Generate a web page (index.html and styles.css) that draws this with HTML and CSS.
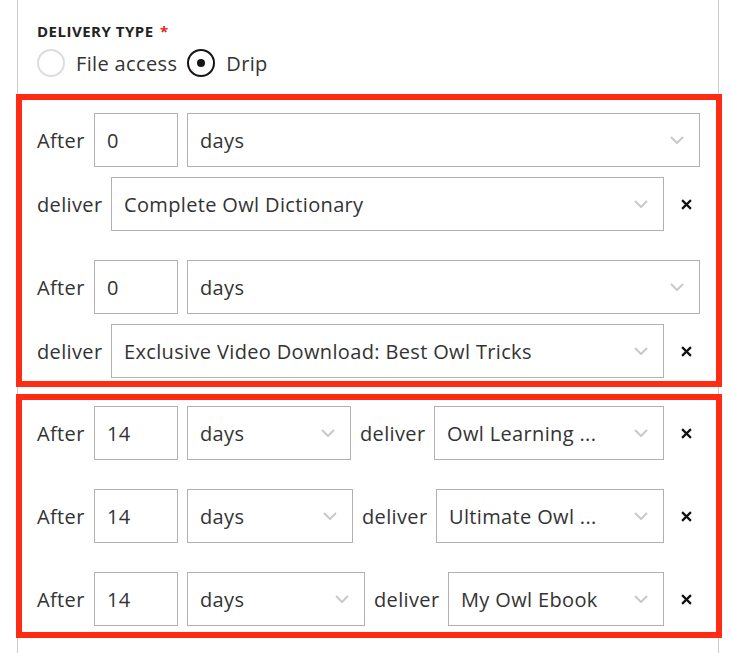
FILE: index.html
```html
<!DOCTYPE html>
<html lang="en">
<head>
<meta charset="utf-8">
<title>Delivery type</title>
<link rel="stylesheet" href="styles.css">
</head>
<body>
<div class="panel">
  <div class="field">
    <div class="field-label">DELIVERY TYPE <span class="req">*</span></div>
    <div class="radios">
      <label class="radio"><span class="radio-dot"></span><span>File access</span></label>
      <label class="radio is-checked"><span class="radio-dot"></span><span>Drip</span></label>
    </div>
  </div>

  <div class="group group-stacked">
    <div class="item">
      <div class="row">
        <span class="lbl lbl-after">After</span>
        <div class="input">0</div>
        <div class="select grow"><span class="select-text">days</span><svg class="chev" viewBox="0 0 14 8"><polyline points="1,1 7,7 13,1"/></svg></div>
      </div>
      <div class="row">
        <span class="lbl lbl-deliver">deliver</span>
        <div class="select grow"><span class="select-text">Complete Owl Dictionary</span><svg class="chev" viewBox="0 0 14 8"><polyline points="1,1 7,7 13,1"/></svg></div>
        <button class="remove" type="button" aria-label="Remove"><svg viewBox="0 0 10 10"><line x1="1" y1="1" x2="9" y2="9"/><line x1="9" y1="1" x2="1" y2="9"/></svg></button>
      </div>
    </div>
    <div class="item">
      <div class="row">
        <span class="lbl lbl-after">After</span>
        <div class="input">0</div>
        <div class="select grow"><span class="select-text">days</span><svg class="chev" viewBox="0 0 14 8"><polyline points="1,1 7,7 13,1"/></svg></div>
      </div>
      <div class="row">
        <span class="lbl lbl-deliver">deliver</span>
        <div class="select grow"><span class="select-text">Exclusive Video Download: Best Owl Tricks</span><svg class="chev" viewBox="0 0 14 8"><polyline points="1,1 7,7 13,1"/></svg></div>
        <button class="remove" type="button" aria-label="Remove"><svg viewBox="0 0 10 10"><line x1="1" y1="1" x2="9" y2="9"/><line x1="9" y1="1" x2="1" y2="9"/></svg></button>
      </div>
    </div>
  </div>

  <div class="group group-inline">
    <div class="row">
      <span class="lbl lbl-after">After</span>
      <div class="input">14</div>
      <div class="select grow"><span class="select-text">days</span><svg class="chev" viewBox="0 0 14 8"><polyline points="1,1 7,7 13,1"/></svg></div>
      <span class="lbl lbl-deliver">deliver</span>
      <div class="select product product-a"><span class="select-text">Owl Learning ...</span><svg class="chev" viewBox="0 0 14 8"><polyline points="1,1 7,7 13,1"/></svg></div>
      <button class="remove" type="button" aria-label="Remove"><svg viewBox="0 0 10 10"><line x1="1" y1="1" x2="9" y2="9"/><line x1="9" y1="1" x2="1" y2="9"/></svg></button>
    </div>
    <div class="row">
      <span class="lbl lbl-after">After</span>
      <div class="input">14</div>
      <div class="select grow"><span class="select-text">days</span><svg class="chev" viewBox="0 0 14 8"><polyline points="1,1 7,7 13,1"/></svg></div>
      <span class="lbl lbl-deliver">deliver</span>
      <div class="select product product-b"><span class="select-text">Ultimate Owl ...</span><svg class="chev" viewBox="0 0 14 8"><polyline points="1,1 7,7 13,1"/></svg></div>
      <button class="remove" type="button" aria-label="Remove"><svg viewBox="0 0 10 10"><line x1="1" y1="1" x2="9" y2="9"/><line x1="9" y1="1" x2="1" y2="9"/></svg></button>
    </div>
    <div class="row">
      <span class="lbl lbl-after">After</span>
      <div class="input">14</div>
      <div class="select grow"><span class="select-text">days</span><svg class="chev" viewBox="0 0 14 8"><polyline points="1,1 7,7 13,1"/></svg></div>
      <span class="lbl lbl-deliver">deliver</span>
      <div class="select product product-c"><span class="select-text">My Owl Ebook</span><svg class="chev" viewBox="0 0 14 8"><polyline points="1,1 7,7 13,1"/></svg></div>
      <button class="remove" type="button" aria-label="Remove"><svg viewBox="0 0 10 10"><line x1="1" y1="1" x2="9" y2="9"/><line x1="9" y1="1" x2="1" y2="9"/></svg></button>
    </div>
  </div>
</div>
</body>
</html>
```

FILE: styles.css
```css
* { box-sizing: border-box; }

html, body {
  margin: 0;
  padding: 0;
  background: #ffffff;
}

body {
  font-family: "Open Sans", "Liberation Sans", sans-serif;
  color: #333333;
}

.panel {
  margin-left: 17px;
  width: 702px;
  min-height: 653px;
  border-left: 1px solid #cccccc;
  border-right: 1px solid #cccccc;
  padding-top: 21px;
}

.field {
  padding-left: 19px;
}

.field-label {
  font-size: 15px;
  font-weight: 700;
  line-height: 20px;
  color: #222222;
  letter-spacing: 0.5px;
}

.req {
  color: #e5231b;
  margin-left: 2px;
}

.radios {
  display: flex;
  align-items: center;
  gap: 10px;
  margin-top: 8px;
  height: 28px;
}

.radio {
  display: flex;
  align-items: center;
  gap: 11px;
  font-size: 20px;
  letter-spacing: 0.35px;
  color: #333333;
}

.radio-dot {
  width: 28px;
  height: 28px;
  border-radius: 50%;
  border: 2px solid #dddddd;
  display: flex;
  align-items: center;
  justify-content: center;
}

.is-checked .radio-dot {
  border-color: #151515;
}

.is-checked .radio-dot::after {
  content: "";
  width: 8px;
  height: 8px;
  border-radius: 50%;
  background: #151515;
}

.group {
  margin-left: -2px;
  width: 706px;
  border: 6px solid #ff2b12;
  padding-left: 15px;
  padding-right: 16px;
}

.group-stacked {
  margin-top: 17px;
  padding-top: 13px;
  padding-bottom: 3px;
  display: flex;
  flex-direction: column;
  gap: 29px;
}

.group-inline {
  margin-top: 7px;
  padding-top: 6px;
  padding-bottom: 6px;
  display: flex;
  flex-direction: column;
  gap: 29px;
}

.item {
  display: flex;
  flex-direction: column;
  gap: 10px;
}

.row {
  display: flex;
  align-items: center;
  gap: 9px;
  height: 54px;
}

.lbl {
  font-size: 20px;
  letter-spacing: 0.35px;
  color: #333333;
  flex: none;
  white-space: nowrap;
}

.lbl-after { width: 48px; }
.lbl-deliver { width: 65px; }

.input,
.select {
  height: 54px;
  border: 1px solid #b1b1b1;
  background: #ffffff;
  font-size: 20px;
  letter-spacing: 0.35px;
  color: #333333;
  display: flex;
  align-items: center;
  white-space: nowrap;
}

.input {
  width: 84px;
  flex: none;
  padding-left: 12px;
}

.select {
  padding-left: 12px;
  padding-right: 15px;
  justify-content: space-between;
  min-width: 0;
}

.grow { flex: 1 1 0; }

.product { flex: none; }
.product-a { width: 230px; }
.product-b { width: 228px; }
.product-c { width: 216px; }

.select-text {
  overflow: hidden;
}

.chev {
  width: 14px;
  height: 8px;
  flex: none;
  margin-left: 10px;
}

.chev polyline {
  fill: none;
  stroke: #c9c9c9;
  stroke-width: 2;
}

.remove {
  width: 27px;
  height: 27px;
  flex: none;
  border: 0;
  background: transparent;
  padding: 0;
  display: flex;
  align-items: center;
  justify-content: center;
  cursor: pointer;
}

.remove svg {
  width: 11px;
  height: 11px;
}

.remove line {
  stroke: #111111;
  stroke-width: 2;
}
```
